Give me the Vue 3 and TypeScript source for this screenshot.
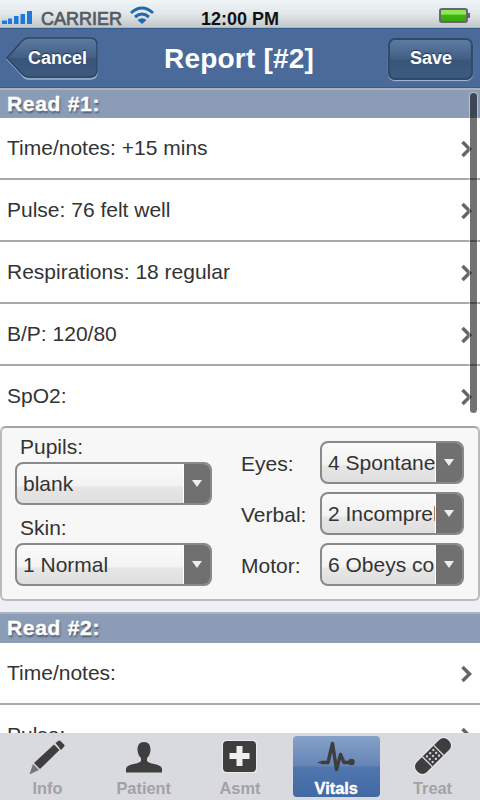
<template>
  <div class="phone">
    <div class="status-bar">
      <svg class="signal" width="32" height="14" viewBox="0 0 32 14">
        <path d="M1 10.500h5v3.500H1zM7 8.500h4v5.500H7zM13 6h4.500v8H13zM19.500 4h4.500v10h-4.500zM26 1h5v13h-5z" />
      </svg>
      <span class="carrier">CARRIER</span>
      <svg class="wifi" width="26" height="19" viewBox="0 0 26 19">
        <path d="M2 7Q13-3 24 7M6 11q7-6 14 0" />
        <path class="wifi-dot" d="M8.500 14q4.500-3.500 9 0L13 18z" />
      </svg>
      <span class="time">12:00 PM</span>
      <span class="battery"></span>
    </div>

    <header class="toolbar">
      <button class="back-button">
        <svg width="92" height="43" viewBox="0 0 92 43">
          <defs>
            <linearGradient id="back-fill" x1="0" y1="0" x2="0" y2="1">
              <stop offset="0" stop-color="#5d7ba1" />
              <stop offset="0.5" stop-color="#435f85" />
              <stop offset="0.52" stop-color="#395679" />
              <stop offset="1" stop-color="#3c597f" />
            </linearGradient>
          </defs>
          <path class="back-glow" d="M1 22 16 5Q19 2 23 2H84Q91 2 91 9V35Q91 42 84 42H23Q19 42 16 38Z" />
          <path class="back-shape" d="M1 21 16 4Q19 1 23 1H84Q91 1 91 8V33Q91 40 84 40H23Q19 40 16 37Z" />
        </svg>
        <span>Cancel</span>
      </button>
      <h1>Report [#2]</h1>
      <button class="save-button">Save</button>
    </header>

    <main class="content">
      <h2 class="section-title">Read #1:</h2>
      <ul class="list">
        <li v-for="item in firstRead" :key="item" class="list-row">
          <span>{{ item }}</span>
          <svg class="chevron" width="14" height="18" viewBox="0 0 14 18"><path d="m2.500 2 7 7-7 7" /></svg>
        </li>
      </ul>

      <section class="panel">
        <div class="column-left">
          <div v-for="field in leftFields" :key="field.label" class="stacked-field">
            <label>{{ field.label }}</label>
            <div class="select">
              <span class="select-value">{{ field.value }}</span>
              <span class="select-arrow"></span>
            </div>
          </div>
        </div>
        <div class="column-right">
          <div v-for="field in rightFields" :key="field.label" class="inline-field">
            <label>{{ field.label }}</label>
            <div class="select">
              <span class="select-value">{{ field.value }}</span>
              <span class="select-arrow"></span>
            </div>
          </div>
        </div>
      </section>

      <h2 class="section-title second">Read #2:</h2>
      <ul class="list">
        <li v-for="item in secondRead" :key="item" class="list-row">
          <span>{{ item }}</span>
          <svg class="chevron" width="14" height="18" viewBox="0 0 14 18"><path d="m2.500 2 7 7-7 7" /></svg>
        </li>
      </ul>
      <div class="scrollbar"></div>
    </main>

    <nav class="tab-bar">
      <div v-for="tab in tabs" :key="tab" class="tab" :class="{ active: tab === activeTab }">
        <svg class="tab-icon" width="40" height="38" viewBox="0 0 40 38">
          <g v-if="tab === 'Info'">
            <path d="m27.500 5 3-2.300q1-.7 2 .3l3.500 3.500q1 1 .2 2L33 12zM26 6.500l5.500 5.500L12 31l-6-6z" />
            <path class="pencil-tip" d="m5 26 6 6-8.500 4q-1 .2-.7-.8z" />
          </g>
          <path
            v-else-if="tab === 'Patient'"
            d="M20 4c-4.500 0-6.500 3-6.500 7.500 0 4 1.500 6.500 3.500 8.500v3C15 26.500 2 25.500 2 31v3.500h36V31c0-5.500-13-4.500-15-8v-3c2-2 3.500-4.500 3.500-8.500 0-4.500-2-7.500-6.500-7.500z"
          />
          <g v-else-if="tab === 'Asmt'">
            <rect class="icon-halo" x="2" y="2" width="35" height="33" rx="4" />
            <rect x="3" y="3" width="33" height="31" rx="4" />
            <path class="cross" d="M16.500 8h6v7h7v6h-7v7h-6v-7h-7v-6h7z" />
          </g>
          <g v-else-if="tab === 'Vitals'">
            <path class="pulse" d="M5 24.500h7l4.500-19 4 26 4-15 3.500 8h7" />
            <circle cx="35.500" cy="24" r="3.200" />
            <path d="m1 24.500 5-1.500h5v3H6z" />
          </g>
          <g v-else transform="rotate(-45 20 18)">
            <rect class="icon-halo" x="-3" y="10" width="46" height="16" rx="7" />
            <rect x="-2" y="11" width="44" height="14" rx="6" />
            <path class="bandage-line" d="M12 11v14M28 11v14" />
            <g class="bandage-dots">
              <circle v-for="dot in bandageDots" :key="`${dot.x}-${dot.y}`" :cx="dot.x" :cy="dot.y" r="1.200" />
            </g>
          </g>
        </svg>
        <span>{{ tab }}</span>
      </div>
    </nav>
  </div>
</template>

<script setup lang="ts">
import { ref } from 'vue';

interface Field {
  label: string;
  value: string;
}

const firstRead: string[] = [
  'Time/notes: +15 mins',
  'Pulse: 76 felt well',
  'Respirations: 18 regular',
  'B/P: 120/80',
  'SpO2:',
];
const secondRead: string[] = ['Time/notes:', 'Pulse:'];

const leftFields: Field[] = [
  { label: 'Pupils:', value: 'blank' },
  { label: 'Skin:', value: '1 Normal' },
];

const rightFields: Field[] = [
  { label: 'Eyes:', value: '4 Spontaneous' },
  { label: 'Verbal:', value: '2 Incomprehensible' },
  { label: 'Motor:', value: '6 Obeys commands' },
];

const tabs = ['Info', 'Patient', 'Asmt', 'Vitals', 'Treat'];
const activeTab = ref('Vitals');

const bandageDots = [15.5, 20, 24.5].flatMap((x) => [14, 18, 22].map((y) => ({ x, y })));
</script>

<style>
body {
  margin: 0;
}
</style>

<style scoped>
* {
  box-sizing: border-box;
}

.phone {
  width: 480px;
  height: 800px;
  display: flex;
  flex-direction: column;
  overflow: hidden;
  background: #eeeff4;
  font-family: 'Liberation Sans', Arial, sans-serif;
  font-size: 21px;
  color: #333;
}

.status-bar {
  flex: none;
  height: 28px;
  display: flex;
  align-items: center;
  padding: 10px 9px 0 1px;
  background: linear-gradient(#f0f5f8, #e2e8ea 50%, #c2c8ca);
  border-bottom: 1px solid #aeb6bd;
  font-size: 18px;
  font-weight: bold;
  line-height: 20px;
  white-space: nowrap;
}

.signal {
  fill: #1c78dc;
  margin-top: -4px;
}

.carrier {
  width: 82px;
  margin-left: 8px;
  color: #555b60;
  font-weight: normal;
  -webkit-text-stroke: 0.7px #555b60;
}

.wifi {
  margin: -6px 0 0 6px;
  fill: none;
  stroke: #2368ae;
  stroke-width: 3;
}

.wifi-dot {
  fill: #2368ae;
  stroke: none;
}

.time {
  margin-left: 46px;
  color: #111;
}

.battery {
  position: relative;
  width: 29px;
  height: 15px;
  margin: -7px 3px 0 auto;
  border: 2px solid #686572;
  border-radius: 3px;
  background: linear-gradient(#8ee857 0 38%, #3fb80c 45%, #39a90e);
}

.battery::after {
  content: '';
  position: absolute;
  left: 26px;
  top: 3px;
  width: 3px;
  height: 5px;
  background: #686572;
}

.toolbar {
  flex: none;
  height: 60px;
  display: flex;
  align-items: center;
  justify-content: space-between;
  padding: 1px 7px 0 6px;
  background: #4a6b9a;
  border-top: 1px solid #345c8e;
  border-bottom: 1px solid #375c8f;
}

.toolbar h1 {
  margin: 0 8px 0 0;
  font-size: 28px;
  line-height: 36px;
  letter-spacing: 0.2px;
  color: #fff;
}

.back-button,
.save-button {
  padding: 0;
  border: none;
  background: none;
  color: #fff;
  font: bold 18px 'Liberation Sans', Arial, sans-serif;
  text-shadow: 0 -1px 1px #1e3655;
}

.back-button {
  display: grid;
  width: 92px;
  height: 43px;
}

.back-button svg,
.back-button span {
  grid-area: 1 / 1;
}

.back-button span {
  align-self: center;
  padding-left: 11px;
}

.back-shape {
  fill: url(#back-fill);
  stroke: #2e4563;
  stroke-width: 1.5;
}

.back-glow {
  fill: none;
  stroke: #a0b5d0;
  stroke-width: 1.5;
}

.save-button {
  width: 85px;
  height: 42px;
  padding-left: 1px;
  border: 2px solid #30496a;
  border-radius: 7px;
  background: linear-gradient(#5d7ba1, #435f85 50%, #395679 52%, #3c597f);
  box-shadow: 0 1px 1px #a9bdd6;
}

.content {
  position: relative;
  flex: 1;
  min-height: 0;
  overflow: hidden;
}

.section-title {
  height: 30px;
  margin: 0;
  padding-left: 7px;
  border-top: 2px solid #adb2bb;
  border-bottom: 1px solid #929eb1;
  background: #8b9cb7;
  color: #fff;
  font-size: 21px;
  line-height: 27px;
  letter-spacing: 0.7px;
  -webkit-text-stroke: 0.4px #fff;
  text-shadow: 1px 2px 2px #4d545f;
}

.section-title.second {
  height: 31px;
  margin-top: 11px;
  line-height: 28px;
}

.list {
  margin: 0;
  padding: 0;
  list-style: none;
  background: #fff;
}

.list-row {
  height: 62px;
  display: flex;
  align-items: center;
  justify-content: space-between;
  padding: 0 6px 0 7px;
  border-bottom: 2px solid #a9a9a9;
}

.list-row:last-child {
  height: 60px;
  border-bottom: none;
}

.chevron {
  margin-top: 1px;
  fill: none;
  stroke: #666;
  stroke-width: 3.5;
}

.panel {
  height: 175px;
  display: flex;
  justify-content: space-between;
  padding: 6px 14px 0 13px;
  border: 2px solid #bbb;
  border-top-color: #a2a3a3;
  border-radius: 6px;
  background: #f7f7f7;
}

.column-left {
  width: 197px;
}

.stacked-field {
  height: 81px;
}

.stacked-field label {
  display: block;
  height: 28px;
  padding-left: 5px;
  line-height: 25px;
}

.column-right {
  width: 224px;
  display: flex;
  flex-direction: column;
  gap: 8px;
  padding-top: 7px;
}

.inline-field {
  display: flex;
  align-items: center;
  justify-content: space-between;
}

.inline-field label {
  padding: 2px 0 0 1px;
}

.inline-field .select {
  width: 144px;
}

.select {
  height: 43px;
  display: flex;
  overflow: hidden;
  border: 2px solid #898989;
  border-radius: 8px;
  background: linear-gradient(#fafafa, #f3f3f3 55%, #e6e6e6 60%, #dfdfdf);
}

.select-value {
  flex: 1;
  min-width: 0;
  overflow: hidden;
  padding-left: 6px;
  line-height: 40px;
  white-space: nowrap;
}

.select-arrow {
  flex: none;
  width: 27px;
  display: flex;
  align-items: center;
  justify-content: center;
  border-left: 1px solid #fff;
  background: #707071;
}

.select-arrow::before {
  content: '';
  border: 5px solid transparent;
  border-top: 7px solid #eee;
  border-bottom: none;
}

.scrollbar {
  position: absolute;
  top: 5px;
  right: 3px;
  width: 7px;
  height: 320px;
  border-radius: 4px;
  background: rgba(0, 0, 0, 0.55);
  box-shadow: 0 0 0 1px rgba(255, 255, 255, 0.4);
}

.tab-bar {
  flex: none;
  height: 67px;
  display: flex;
  justify-content: space-between;
  padding: 3px 4px;
  background: #d9dadf;
}

.tab {
  width: 87px;
  height: 61px;
  display: flex;
  flex-direction: column;
  align-items: center;
  padding-top: 2px;
  border-radius: 4px;
  color: #a2a2a5;
  font-size: 16.400px;
  font-weight: bold;
  line-height: 24px;
}

.tab.active {
  background: linear-gradient(#86a1c9, #6686b6 48%, #4f76ad 52%, #4269a2);
  color: #fff;
  -webkit-text-stroke: 0.4px #fff;
}

.tab-icon {
  flex: none;
  overflow: visible;
  fill: #3e3e3f;
}

.pencil-tip {
  fill: #777;
}

.cross {
  fill: #eee;
}

.icon-halo {
  fill: #ececef;
}

.pulse {
  fill: none;
  stroke: #3e3e3f;
  stroke-width: 3.4;
  stroke-linejoin: round;
}

.bandage-line {
  stroke: #ddd;
  stroke-width: 1.3;
}

.bandage-dots {
  fill: #d2d2d5;
}
</style>
